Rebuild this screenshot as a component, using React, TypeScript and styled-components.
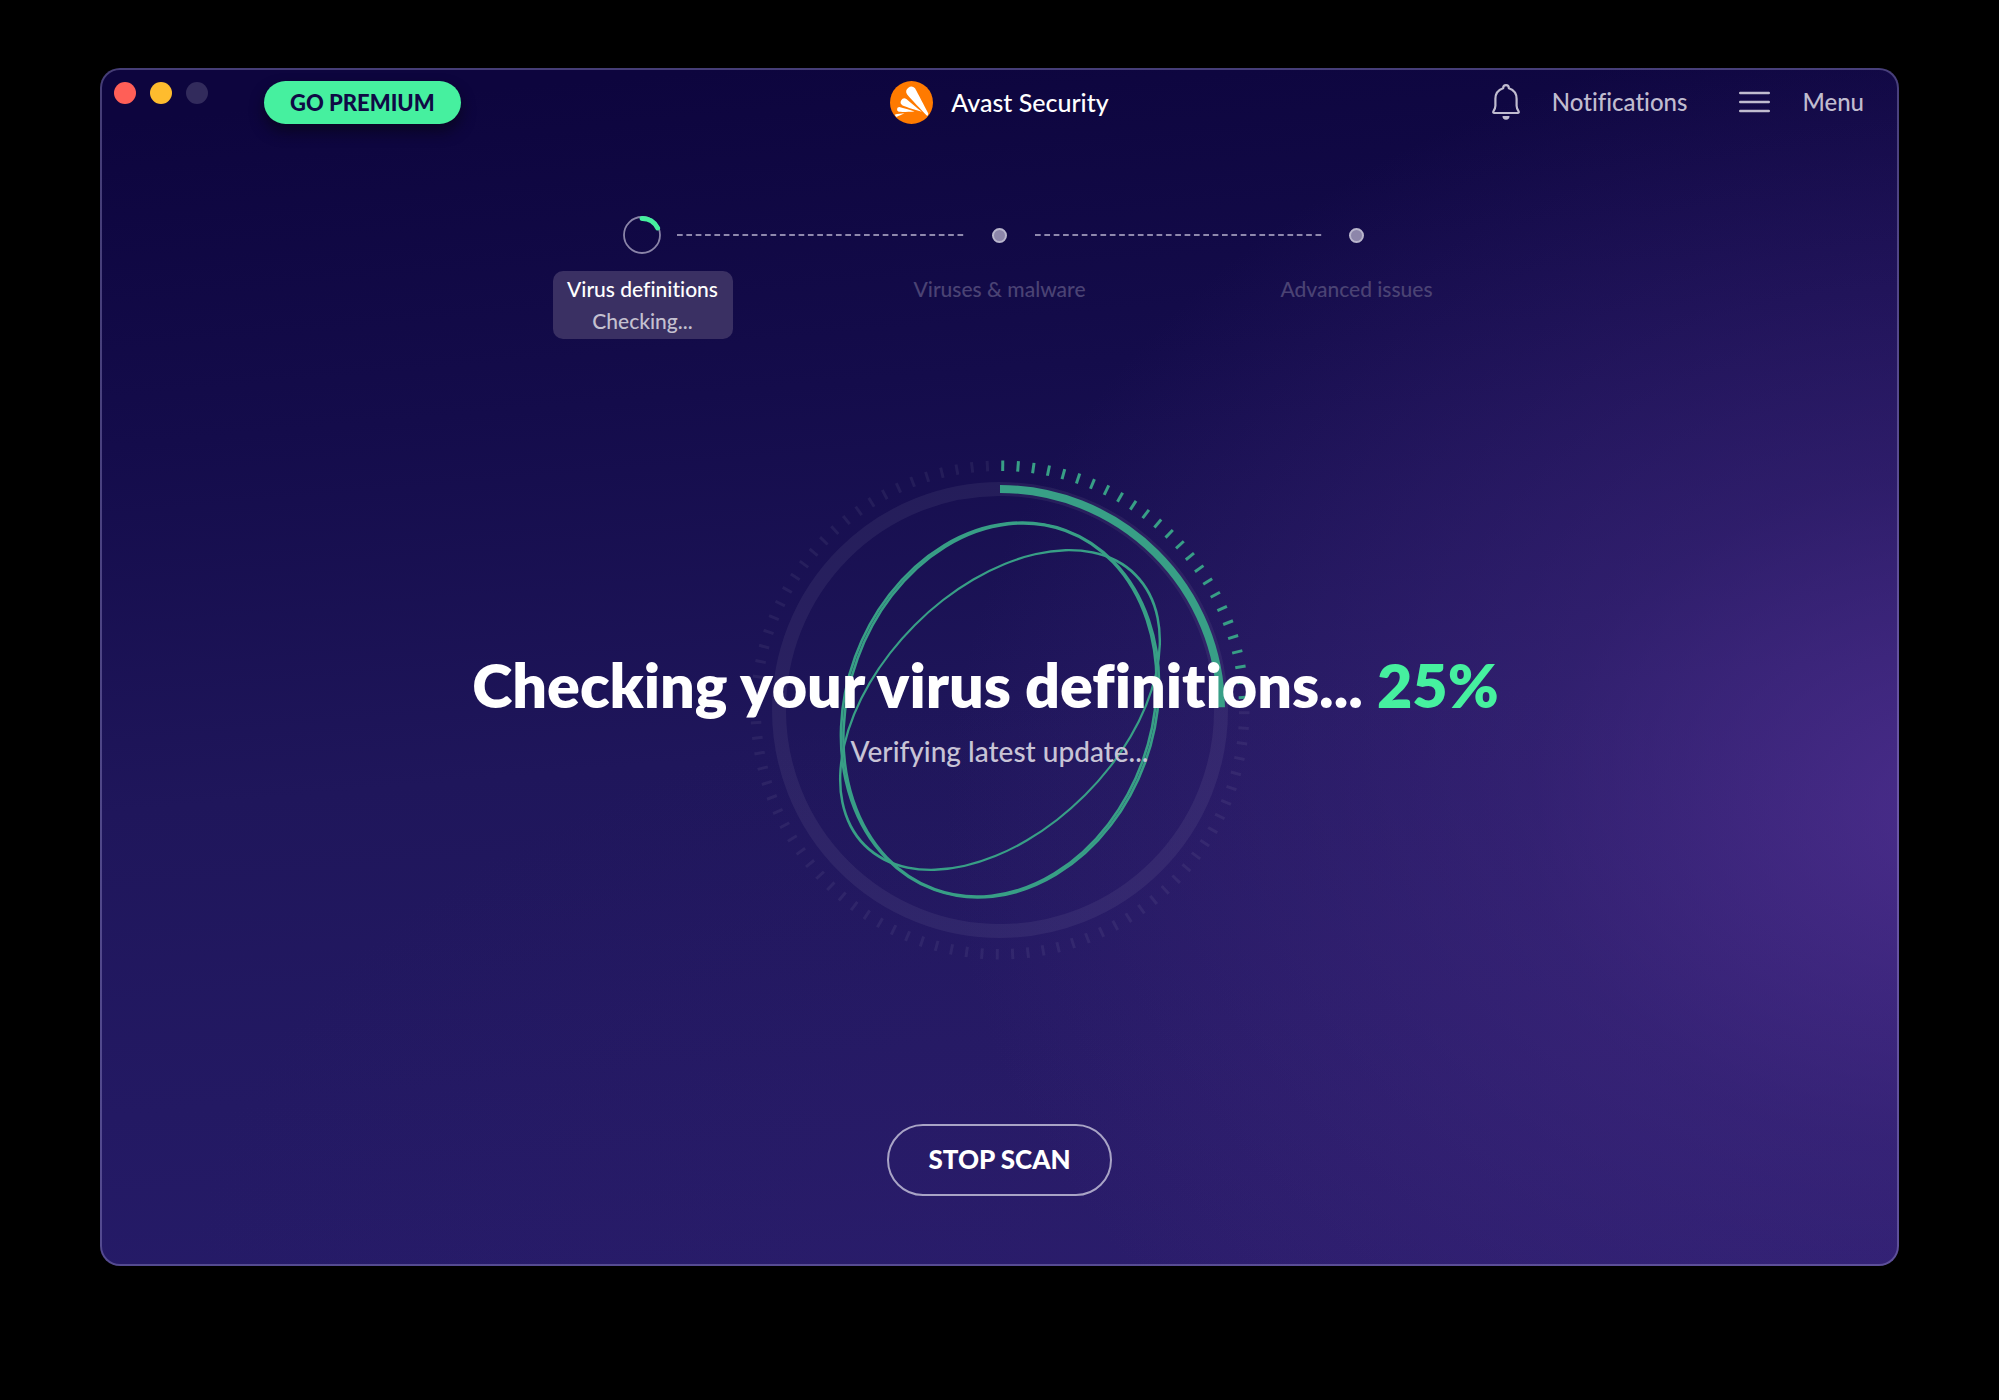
import React from "react";
import styled, { createGlobalStyle } from "styled-components";

const green = "#46f09f";
const softGreen = "#389f86";

const GlobalStyle = createGlobalStyle`
  *, *::before, *::after { box-sizing: border-box; }
  body {
    margin: 0;
    background: #000;
    color: #fff;
    font-family: Lato, "Open Sans", "Liberation Sans", sans-serif;
    font-variant-ligatures: none;
  }
  button { font: inherit; font-variant-ligatures: none; color: inherit; cursor: pointer; }
`;

const Desktop = styled.div`
  min-height: 100vh;
  padding: 68px 100px;
`;

const Window = styled.div`
  display: flex;
  flex-direction: column;
  border: 2px solid rgba(170, 160, 220, 0.36);
  border-radius: 20px;
  overflow: hidden;
  background:
    radial-gradient(ellipse 56% 66% at 103% 62%, rgba(84, 50, 150, 0.78) 0%, rgba(76, 46, 140, 0.4) 42%, rgba(70, 44, 130, 0) 100%) border-box,
    radial-gradient(ellipse 60% 50% at 65% 100%, rgba(54, 32, 112, 0.3), rgba(54, 32, 112, 0)) border-box,
    linear-gradient(175deg, #0d053e 4%, #140c4b 28%, #1f165b 55%, #271c6b 100%) border-box;
`;

const Header = styled.header`
  display: grid;
  grid-template-columns: 1fr auto 1fr;
  align-items: center;
  height: 64px;
  padding: 0 12px;
`;

const HeaderStart = styled.div`
  display: flex;
  align-items: center;
`;

const Lights = styled.div`
  display: flex;
  gap: 14px;
  margin: 0 56px 18px 0;
`;

const Light = styled.button<{ $color: string }>`
  width: 22px;
  height: 22px;
  padding: 0;
  border: 0;
  border-radius: 50%;
  background: ${(p) => p.$color};
`;

const PremiumButton = styled.button`
  height: 43px;
  padding: 0 26px;
  border: 0;
  border-radius: 22px;
  background: ${green};
  color: #0f0a45;
  font-size: 22px;
  font-weight: 900;
  line-height: 43px;
  box-shadow: 0 8px 14px rgba(8, 6, 24, 0.7);
`;

const Brand = styled.div`
  display: flex;
  align-items: center;
  gap: 18px;
  font-size: 25px;
  font-weight: 500;
  line-height: 32px;
`;

const HeaderEnd = styled.nav`
  display: flex;
  justify-content: flex-end;
  gap: 52px;
  padding-right: 21px;
`;

const HeaderButton = styled.button`
  display: flex;
  align-items: center;
  gap: 32px;
  padding: 0;
  border: 0;
  background: none;
  color: #c0bccf;
  font-size: 24px;
  font-weight: 500;
  line-height: 32px;
`;

const Main = styled.main`
  display: flex;
  flex-direction: column;
  align-items: center;
`;

const Stepper = styled.section`
  width: 100%;
  max-width: 1071px;
  margin-top: 82px;
`;

const Track = styled.div`
  display: flex;
  align-items: center;
  height: 38px;
  padding: 0 calc(100% / 6 - 19px);
`;

const Marker = styled.div`
  display: flex;
  flex: none;
  align-items: center;
  justify-content: center;
  width: 38px;
  height: 38px;
`;

const Dot = styled.span`
  width: 15px;
  height: 15px;
  border: 2px solid #b9b5cc;
  border-radius: 50%;
  background: #8d86aa;
`;

const Connector = styled.svg`
  flex: 1;
  min-width: 0;
  height: 2px;
  margin: 0 16px;
`;

const Labels = styled.ol`
  display: grid;
  grid-template-columns: repeat(3, 1fr);
  justify-items: center;
  align-items: start;
  margin: 17px 0 0;
  padding: 0;
  list-style: none;
`;

const StepLabel = styled.li<{ $active?: boolean }>`
  min-width: 180px;
  padding: 2px 12px;
  border-radius: 10px;
  background: ${(p) => (p.$active ? "#3a3063" : "none")};
  color: ${(p) => (p.$active ? "#fff" : "#4b4374")};
  font-size: 21px;
  font-weight: 500;
  line-height: 32px;
  text-align: center;
`;

const StepStatus = styled.div`
  color: #c4c0d0;
`;

const Stage = styled.section`
  display: grid;
  justify-items: center;
  width: 100%;
  height: 500px;
  margin-top: 121px;

  & > * { grid-area: 1 / 1; }
`;

const GaugeArt = styled.svg`
  width: 500px;
  height: 500px;
`;

const Readout = styled.div`
  z-index: 1;
  padding-top: 189px;
  text-align: center;
`;

const Title = styled.h1`
  margin: 0;
  padding-right: 28px;
  font-size: 61px;
  font-weight: 800;
  line-height: 72px;
`;

const Percent = styled.span`
  color: ${green};
`;

const Subtitle = styled.p`
  margin: 12px 0 0;
  color: #c8c4d6;
  font-size: 28px;
  font-weight: 500;
  line-height: 36px;
`;

const StopButton = styled.button`
  min-width: 225px;
  height: 72px;
  margin: 164px 0 68px;
  padding: 0 36px 2px;
  border: 2px solid #a9a4c6;
  border-radius: 36px;
  background: none;
  font-size: 26px;
  font-weight: 900;
  line-height: 66px;
`;

const Logo = () => (
  <svg width="43" height="43" viewBox="0 0 43 43" aria-hidden="true">
    <circle cx="21.5" cy="21.5" r="21.5" fill="#ff7a00" />
    <g fill="#fff">
      <path d="M25 7.3 C28.5 13.5 34 24.5 38.3 32.4 Q38.2 34.2 37.2 34.9 C31 28.4 22 19.3 17 13.2 A5 5 0 0 1 25 7.3z" />
      <path d="M16.4 17.9 C20.5 21.4 27 27 31.8 30.7 C25.5 28.9 17.5 26.5 12.6 24.4 A3.7 3.7 0 0 1 16.4 17.9z" />
      <path d="M9.4 25.9 C13.5 26.9 20 28.8 24.5 30.4 C19 30.8 13 31 8.8 30.8 A2.5 2.5 0 0 1 9.4 25.9z" />
      <path d="M5 33.4 C7.5 32.9 11.5 32.5 14.5 32.3 C11.8 33.5 8.8 34.9 6.6 36 Q4.7 34.6 5 33.4z" />
    </g>
  </svg>
);

const Bell = () => (
  <svg width="28" height="37" viewBox="0 0 28 37" fill="none" stroke="currentColor" strokeWidth="2.2" aria-hidden="true">
    <path d="M14 1.2c1.8 0 2.8 1 2.9 3 4.7 1.6 7.7 5.4 7.7 10.6v7c0 2.2.7 3.5 1.9 5.4.6 1.1.2 1.8-.8 1.8H2.3c-1 0-1.4-.7-.8-1.8 1.2-1.9 1.9-3.2 1.9-5.4v-7C3.4 9.6 6.4 5.8 11.1 4.2 11.2 2.2 12.2 1.2 14 1.2z" />
    <path d="M10.5 32h7a3.5 3.8 0 0 1-7 0z" fill="currentColor" stroke="none" />
  </svg>
);

const MenuLines = () => (
  <svg width="31" height="22" viewBox="0 0 31 22" stroke="currentColor" strokeWidth="2.4" strokeLinecap="round" aria-hidden="true">
    <path d="M1.2 2h28.6M1.2 11h28.6M1.2 20h28.6" />
  </svg>
);

const StepRing = () => (
  <svg width="38" height="38" viewBox="0 0 38 38" fill="none" aria-hidden="true">
    <circle cx="19" cy="19" r="18" stroke="#8a84a8" strokeWidth="1.8" />
    <path d="M19 2.5A17 17 0 0 1 34.6 12" stroke={green} strokeWidth="5" strokeLinecap="round" />
  </svg>
);

const DashedLine = () => (
  <Connector aria-hidden="true">
    <line x1="0" y1="1" x2="100%" y2="1" stroke="#8f89ad" strokeWidth="1.8" strokeDasharray="5.7 3.65" />
  </Connector>
);

const TICKS = 100;
const ellipsePath = (a: number, b: number) =>
  `M0 ${-a}A${b} ${a} 0 0 1 0 ${a}A${b} ${a} 0 0 1 0 ${-a}z`;

const Gauge = ({ percent }: { percent: number }) => {
  const radius = 221;
  const circumference = 2 * Math.PI * radius;
  const swept = circumference * (percent / 100) - 3;
  return (
    <GaugeArt viewBox="-250 -250 500 500" fill="none" role="img" aria-label={`Scan progress ${percent}%`}>
      {Array.from({ length: TICKS }, (_, i) => (
        <line
          key={i}
          y1={-249.5}
          y2={-239}
          transform={`rotate(${i * (360 / TICKS) + 0.64})`}
          stroke={i < percent ? softGreen : "rgba(255,255,255,0.06)"}
          strokeWidth="3"
        />
      ))}
      <circle r={radius} stroke="rgba(255,255,255,0.06)" strokeWidth="14" />
      <circle
        r={radius}
        stroke={softGreen}
        strokeWidth="8"
        strokeDasharray={`${swept} ${circumference}`}
        transform="rotate(-90)"
      />
      <g transform="rotate(20)" stroke={softGreen} strokeWidth="2.6">
        <ellipse rx="154.3" ry="191.4" />
        <ellipse rx="151.5" ry="190.8" />
      </g>
      <path
        d={ellipsePath(192.7, 121.4) + ellipsePath(190, 119.3)}
        transform="rotate(45)"
        fill={softGreen}
        fillRule="evenodd"
      />
    </GaugeArt>
  );
};

export default function App() {
  const percent = 25;
  return (
    <>
      <GlobalStyle />
      <Desktop>
        <Window>
          <Header>
            <HeaderStart>
              <Lights>
                <Light $color="#ff5f57" aria-label="Close" />
                <Light $color="#febc2e" aria-label="Minimize" />
                <Light $color="#322b5c" aria-label="Zoom" />
              </Lights>
              <PremiumButton>GO PREMIUM</PremiumButton>
            </HeaderStart>
            <Brand>
              <Logo />
              <span>Avast Security</span>
            </Brand>
            <HeaderEnd>
              <HeaderButton>
                <Bell />
                <span>Notifications</span>
              </HeaderButton>
              <HeaderButton>
                <MenuLines />
                <span>Menu</span>
              </HeaderButton>
            </HeaderEnd>
          </Header>
          <Main>
            <Stepper>
              <Track>
                <Marker><StepRing /></Marker>
                <DashedLine />
                <Marker><Dot /></Marker>
                <DashedLine />
                <Marker><Dot /></Marker>
              </Track>
              <Labels>
                <StepLabel $active>
                  Virus definitions
                  <StepStatus>Checking...</StepStatus>
                </StepLabel>
                <StepLabel>Viruses &amp; malware</StepLabel>
                <StepLabel>Advanced issues</StepLabel>
              </Labels>
            </Stepper>
            <Stage>
              <Gauge percent={percent} />
              <Readout>
                <Title>
                  Checking your virus definitions... <Percent>{percent}%</Percent>
                </Title>
                <Subtitle>Verifying latest update...</Subtitle>
              </Readout>
            </Stage>
            <StopButton>STOP SCAN</StopButton>
          </Main>
        </Window>
      </Desktop>
    </>
  );
}
